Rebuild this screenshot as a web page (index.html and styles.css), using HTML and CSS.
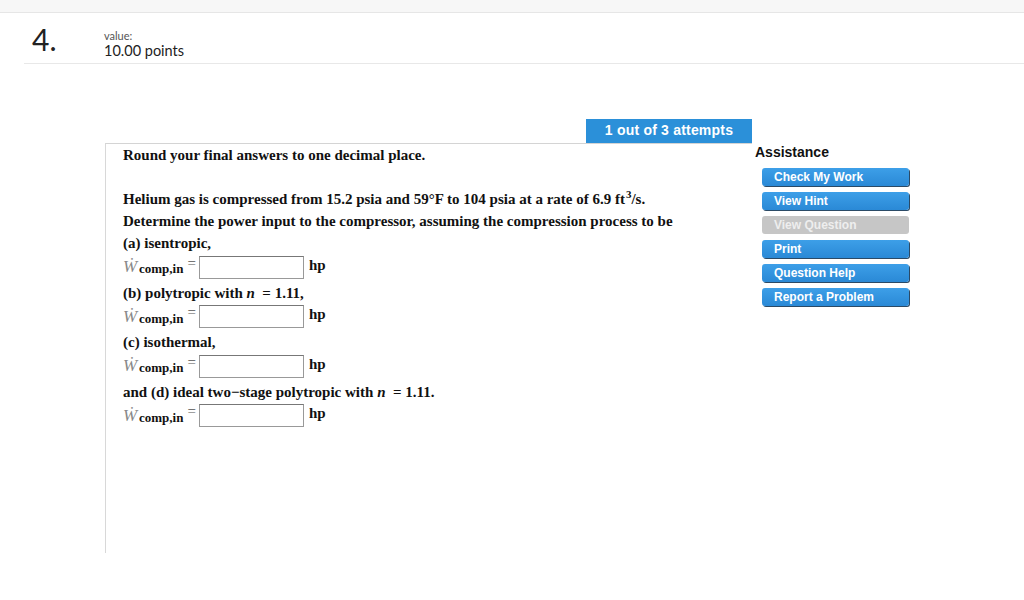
FILE: index.html
```html
<!DOCTYPE html>
<html lang="en">
<head>
    <meta charset="UTF-8">
    <title>Question 4</title>
    <link rel="stylesheet" href="styles.css">
</head>
<body>
    <div class="topbar"></div>

    <div class="question-header">
        <div class="question-number">4.</div>
        <div class="question-value">
            <span class="value-label">value:</span>
            <span class="value-points">10.00 points</span>
        </div>
    </div>

    <div class="question-body">
        <div class="problem-column">
            <div class="attempts-row">
                <div class="attempts">1 out of 3 attempts</div>
            </div>
            <div class="problem">
                <p class="line">Round your final answers to one decimal place.</p>
                <p class="line gap">Helium gas is compressed from 15.2 psia and 59°F to 104 psia at a rate of 6.9 ft<sup>3</sup>/s.</p>
                <p class="line">Determine the power input to the compressor, assuming the compression process to be</p>
                <p class="line">(a) isentropic,</p>
                <div class="answer">
                    <span class="w">Ẇ</span><span class="sub">comp,in</span><span class="eq">=</span><input type="text"><span class="unit">hp</span>
                </div>
                <p class="line">(b) polytropic with <i>n</i>&nbsp; = 1.11,</p>
                <div class="answer">
                    <span class="w">Ẇ</span><span class="sub">comp,in</span><span class="eq">=</span><input type="text"><span class="unit">hp</span>
                </div>
                <p class="line">(c) isothermal,</p>
                <div class="answer">
                    <span class="w">Ẇ</span><span class="sub">comp,in</span><span class="eq">=</span><input type="text"><span class="unit">hp</span>
                </div>
                <p class="line">and (d) ideal two−stage polytropic with <i>n</i>&nbsp; = 1.11.</p>
                <div class="answer">
                    <span class="w">Ẇ</span><span class="sub">comp,in</span><span class="eq">=</span><input type="text"><span class="unit">hp</span>
                </div>
            </div>
        </div>

        <div class="assistance">
            <h3>Assistance</h3>
            <div class="help-buttons">
                <button class="help-btn">Check My Work</button>
                <button class="help-btn">View Hint</button>
                <button class="help-btn disabled">View Question</button>
                <button class="help-btn">Print</button>
                <button class="help-btn">Question Help</button>
                <button class="help-btn">Report a Problem</button>
            </div>
        </div>
    </div>
</body>
</html>
```

FILE: styles.css
```css
* {
    margin: 0;
    padding: 0;
    box-sizing: border-box;
}

body {
    background: #fff;
    color: #222;
    font-family: Lato, 'Liberation Sans', sans-serif;
}

.topbar {
    height: 13px;
    background: #f7f7f7;
    border-bottom: 1px solid #e6e6e6;
}

.question-header {
    display: flex;
    margin-left: 24px;
    height: 51px;
    border-bottom: 1px solid #e8e8e8;
}

.question-number {
    width: 80px;
    padding: 8px 0 0 8px;
    font-size: 30px;
    color: #222;
}

.question-value {
    display: flex;
    flex-direction: column;
    padding-top: 16px;
}

.value-label {
    font-size: 11px;
    color: #555;
    line-height: 13px;
}

.value-points {
    font-size: 14.5px;
    color: #222;
    line-height: 17px;
}

.question-body {
    display: flex;
    padding-left: 105px;
    padding-top: 55px;
}

.problem-column {
    width: 647px;
}

.attempts-row {
    display: flex;
    justify-content: flex-end;
}

.attempts {
    width: 166px;
    height: 24px;
    background: #2b90d9;
    color: #fff;
    font-family: 'Liberation Sans', Arial, sans-serif;
    font-weight: bold;
    font-size: 14px;
    letter-spacing: 0.2px;
    line-height: 23px;
    text-align: center;
}

.problem {
    border-top: 1px solid #d4d4d4;
    border-left: 1px solid #d8d8d8;
    height: 410px;
    padding: 0 0 0 17px;
    font-family: 'Liberation Serif', 'Times New Roman', serif;
    font-weight: bold;
    font-size: 15px;
    color: #111;
}

.line {
    line-height: 22px;
    height: 22px;
}

.line.gap {
    margin-top: 22px;
}

.line sup {
    font-size: 11px;
    line-height: 0;
    margin-left: 1px;
}

.line i {
    font-style: italic;
    font-weight: bold;
}

.answer {
    display: flex;
    align-items: center;
    height: 27.5px;
    padding-bottom: 1px;
}

.w {
    font-style: italic;
    font-weight: normal;
    color: #888;
    font-size: 17px;
    width: 16px;
}

.sub {
    font-size: 13px;
    position: relative;
    top: 2px;
}

.eq {
    font-weight: normal;
    color: #555;
    font-size: 15px;
    margin: 0 3px 0 4px;
    position: relative;
    top: -4px;
}

.answer input {
    width: 105px;
    height: 23px;
    border: 1px solid #999;
    border-top-color: #777;
    background: #fff;
}

.unit {
    margin-left: 5px;
    position: relative;
    top: -2px;
}

.assistance {
    padding: 25px 0 0 3px;
    font-family: 'Liberation Sans', Arial, sans-serif;
}

.assistance h3 {
    font-size: 14px;
    color: #111;
    line-height: 16px;
    margin-bottom: 8px;
}

.help-buttons {
    display: flex;
    flex-direction: column;
    gap: 6px;
    padding-left: 7px;
}

.help-btn {
    width: 147px;
    height: 18px;
    border: none;
    border-radius: 3px;
    background: linear-gradient(180deg, #3d9fe8 0%, #2a89d6 100%);
    box-shadow: 1px 1px 0 #2b4a66;
    color: #fff;
    font-family: 'Liberation Sans', Arial, sans-serif;
    font-weight: bold;
    font-size: 12px;
    text-align: left;
    padding-left: 12px;
    line-height: 18px;
}

.help-btn.disabled {
    background: #c6c6c6;
    box-shadow: none;
    color: #eee;
}
```
